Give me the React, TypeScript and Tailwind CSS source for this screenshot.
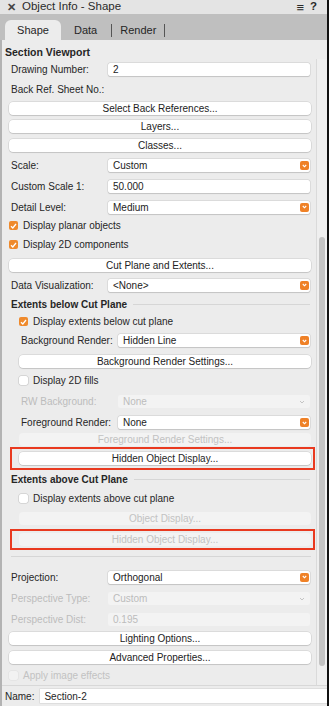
import React from "react";

const font = { fontFamily: '"Liberation Sans", Arial, sans-serif' };

function Chevron({ disabled }: { disabled?: boolean }) {
  if (disabled) {
    return (
      <svg width="6" height="4" viewBox="0 0 6 4" className="mr-[5px]">
        <path d="M1 1 L3 3 L5 1" stroke="#c4c4c4" strokeWidth="1" fill="none" />
      </svg>
    );
  }
  return (
    <div className="mr-[1px] flex h-[9px] w-[9px] items-center justify-center rounded-[2px] bg-[#ef8127]">
      <svg width="5" height="4" viewBox="0 0 5 4">
        <path d="M0.8 1 L2.5 2.8 L4.2 1" stroke="#fff" strokeWidth="1.1" fill="none" />
      </svg>
    </div>
  );
}

function Field({ value, disabled, select, w }: { value: string; disabled?: boolean; select?: boolean; w: string }) {
  return (
    <div
      className={`flex h-[13px] items-center justify-between rounded-[2px] pl-[5px] ${w} ${
        disabled
          ? "bg-[#f3f3f3] text-[#bcbcbc]"
          : "bg-white text-[#222] shadow-[0_0_0_0.5px_rgba(0,0,0,0.12),0_0.5px_1px_rgba(0,0,0,0.12)]"
      }`}
    >
      <span>{value}</span>
      {select && <Chevron disabled={disabled} />}
    </div>
  );
}

function Row({
  h,
  label,
  value,
  select,
  disabled,
  indent,
}: {
  h: string;
  label: string;
  value: string;
  select?: boolean;
  disabled?: boolean;
  indent?: boolean;
}) {
  return (
    <div className={`flex items-center ${h}`}>
      <div className={`${indent ? "w-[116px] pl-[19px]" : "w-[106px] pl-[9px]"} ${disabled ? "text-[#bcbcbc]" : ""}`}>
        {label}
      </div>
      <Field value={value} select={select} disabled={disabled} w={indent ? "w-[192px]" : "w-[202px]"} />
    </div>
  );
}

function Btn({ label, h, disabled, indent }: { label: string; h?: string; disabled?: boolean; indent?: boolean }) {
  const b = (
    <div
      className={`flex h-[13px] items-center justify-center rounded-[4px] ${
        disabled
          ? "bg-[#f3f3f3] text-[#c2c2c2]"
          : "bg-white text-[#222] shadow-[0_0_0_0.5px_rgba(0,0,0,0.14),0_1px_1px_rgba(0,0,0,0.1)]"
      } ${indent ? "ml-[17px]" : "ml-[7px]"} mr-[5px]`}
    >
      {label}
    </div>
  );
  if (!h) return b;
  return <div className={`flex flex-col justify-center ${h}`}>{b}</div>;
}

function Check({ label, checked, disabled, indent, h }: { label: string; checked?: boolean; disabled?: boolean; indent?: boolean; h: string }) {
  return (
    <div className={`flex items-center ${h} ${indent ? "pl-[17px]" : "pl-[7px]"}`}>
      {checked ? (
        <div className="flex h-[9px] w-[9px] items-center justify-center rounded-[2px] bg-[#ef8a2c]">
          <svg width="7" height="6" viewBox="0 0 7 6">
            <path d="M1 3.2 L2.8 5 L6 1" stroke="#fff" strokeWidth="1.3" fill="none" />
          </svg>
        </div>
      ) : (
        <div
          className={`h-[9px] w-[9px] rounded-[2px] ${
            disabled ? "bg-[#f2f2f2] shadow-[0_0_0_0.5px_rgba(0,0,0,0.06)]" : "bg-white shadow-[0_0_0_0.5px_rgba(0,0,0,0.18)]"
          }`}
        />
      )}
      <span className={`ml-[5px] ${disabled ? "text-[#c2c2c2]" : ""}`}>{label}</span>
    </div>
  );
}

function Heading({ label, h }: { label: string; h: string }) {
  return (
    <div className={`flex items-center pl-[9px] pr-[6px] ${h}`}>
      <span className="font-bold">{label}</span>
      <div className="ml-[6px] h-px flex-1 bg-[#d6d6d6]" />
    </div>
  );
}

export default function App() {
  return (
    <div className="flex h-[706px] w-[329px] overflow-hidden bg-[#ececec] text-[10px] text-[#262626]" style={font}>
      <div className="flex w-[327px] flex-col">
        <div className="flex h-[14px] items-center bg-[#e4e4e4] pl-[7px] pr-[10px] text-[11.5px] text-[#2a2a2a]">
          <span className="text-[11px] font-bold text-[#444]">✕</span>
          <span className="ml-[6px]">Object Info - Shape</span>
          <span className="ml-auto text-[13px] leading-none">≡</span>
          <span className="ml-[6px] font-bold">?</span>
        </div>
        <div className="flex h-[26px] items-end bg-[#bfbfbf] text-[11px]">
          <div className="ml-[5px] flex h-[20px] w-[56px] items-center justify-center rounded-t-[6px] bg-[#ececec]">
            Shape
          </div>
          <div className="mb-[2px] flex h-[16px] items-center">
            <span className="ml-[13px]">Data</span>
            <span className="ml-[14px] h-[13px] w-px bg-[#555]" />
            <span className="ml-[8px]">Render</span>
            <span className="ml-[8px] h-[13px] w-px bg-[#555]" />
          </div>
        </div>
        <div className="flex flex-1 border-l-[2px] border-[#b3b3b3]">
          <div className="flex flex-1 flex-col">
            <div className="h-[19px] pt-[7px] pl-[3px] text-[10.5px] font-bold leading-none">Section Viewport</div>
            <div className="flex h-[626px]">
              <div className="flex w-[314px] flex-col overflow-hidden">
                <Row h="h-[20px]" label="Drawing Number:" value="2" />
                <div className="flex h-[20px] items-center pl-[9px]">Back Ref. Sheet No.:</div>
                <Btn h="h-[18px]" label="Select Back References..." />
                <Btn h="h-[19px]" label="Layers..." />
                <Btn h="h-[19px]" label="Classes..." />
                <Row h="h-[21px]" label="Scale:" value="Custom" select />
                <Row h="h-[21px]" label="Custom Scale 1:" value="50.000" />
                <Row h="h-[20px]" label="Detail Level:" value="Medium" select />
                <Check h="h-[17px]" label="Display planar objects" checked />
                <Check h="h-[21px]" label="Display 2D components" checked />
                <Btn h="h-[20px]" label="Cut Plane and Extents..." />
                <Row h="h-[20px]" label="Data Visualization:" value="<None>" select />
                <Heading h="h-[18px]" label="Extents below Cut Plane" />
                <Check h="h-[17px]" label="Display extents below cut plane" checked indent />
                <Row h="h-[21px]" label="Background Render:" value="Hidden Line" select indent />
                <Btn h="h-[20px]" label="Background Render Settings..." indent />
                <Check h="h-[19px]" label="Display 2D fills" indent />
                <Row h="h-[23px]" label="RW Background:" value="None" select disabled indent />
                <Row h="h-[19px]" label="Foreground Render:" value="None" select indent />
                <Btn h="h-[15px]" label="Foreground Render Settings..." disabled indent />
                <div className="ml-[8px] mr-[1px] flex h-[23px] flex-col justify-center border-[2px] border-[#e9391f] pl-[7px] pr-[2px]">
                  <div className="flex h-[13px] items-center justify-center rounded-[4px] bg-white shadow-[0_0_0_0.5px_rgba(0,0,0,0.14),0_1px_1px_rgba(0,0,0,0.1)]">
                    Hidden Object Display...
                  </div>
                </div>
                <Heading h="h-[19px]" label="Extents above Cut Plane" />
                <Check h="h-[19px]" label="Display extents above cut plane" indent />
                <Btn h="h-[21px]" label="Object Display..." disabled indent />
                <div className="ml-[8px] mr-[1px] flex h-[21px] flex-col justify-center border-[2px] border-[#e9391f] pl-[7px] pr-[2px]">
                  <div className="flex h-[13px] items-center justify-center rounded-[4px] bg-[#f3f3f3] text-[#c2c2c2]">
                    Hidden Object Display...
                  </div>
                </div>
                <div className="h-[16px] pt-[6px] pl-[9px] pr-[5px]">
                  <div className="h-px bg-[#d6d6d6]" />
                </div>
                <Row h="h-[22px]" label="Projection:" value="Orthogonal" select />
                <Row h="h-[21px]" label="Perspective Type:" value="Custom" select disabled />
                <Row h="h-[20px]" label="Perspective Dist:" value="0.195" disabled />
                <Btn h="h-[19px]" label="Lighting Options..." />
                <Btn h="h-[19px]" label="Advanced Properties..." />
                <Check h="h-[16px]" label="Apply image effects" disabled />
              </div>
              <div className="flex w-[11px] flex-col border-l border-[#dadada] bg-[#efefef]">
                <div className="ml-[2px] mt-[178px] h-[429px] w-[6px] rounded-full bg-[#c3c3c3]" />
              </div>
            </div>
            <div className="flex h-[21px] items-center border-t border-[#d8d8d8] pl-[3px]">
              <span>Name:</span>
              <div className="ml-[6px] flex h-[14px] w-[289px] items-center bg-white pl-[4px] shadow-[0_0_0_0.5px_rgba(0,0,0,0.12)]">
                Section-2
              </div>
            </div>
          </div>
        </div>
      </div>
      <div className="w-[2px] bg-[#111]" />
    </div>
  );
}
